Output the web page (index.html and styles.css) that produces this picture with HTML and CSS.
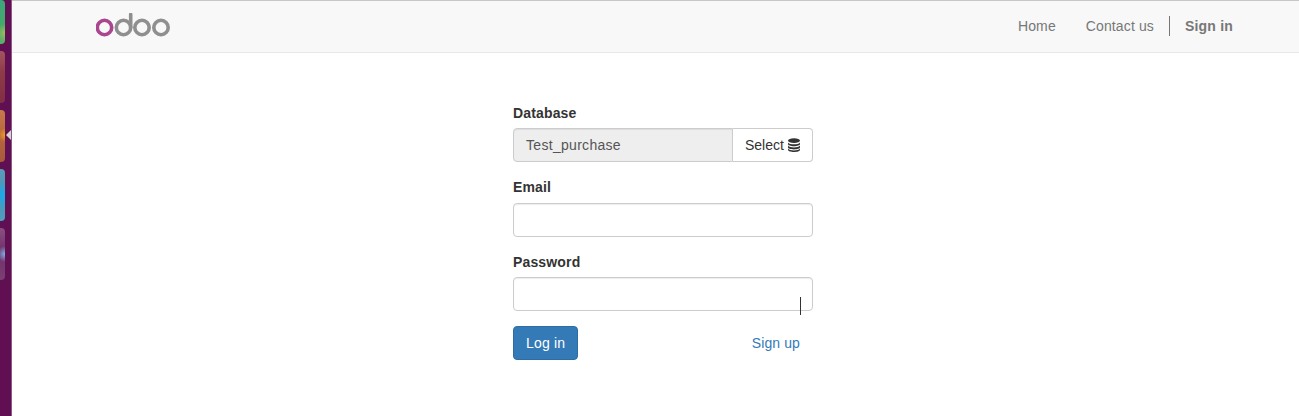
FILE: index.html
```html
<!DOCTYPE html>
<html lang="en">
<head>
<meta charset="utf-8">
<title>Odoo - Sign in</title>
<link rel="stylesheet" href="styles.css">
</head>
<body>
<div class="page">
  <aside class="launcher">
    <div class="tile tile-green"></div>
    <div class="tile tile-red"></div>
    <div class="tile tile-orange"></div>
    <div class="tile tile-blue"></div>
    <div class="tile tile-purple"></div>
    <span class="launcher-arrow"></span>
  </aside>
  <div class="content">
    <header class="navbar">
      <svg class="logo" width="76" height="27" viewBox="0 0 76 27" aria-label="odoo">
        <circle cx="8.500" cy="14.500" r="7.200" fill="none" stroke="#a9468f" stroke-width="3.600"/>
        <g fill="none" stroke="#8f8f8f" stroke-width="3.600">
          <circle cx="27.500" cy="14.500" r="7.200"/>
          <path d="M34.700 14.500V1.500" stroke-linecap="round"/>
          <circle cx="46" cy="14.500" r="7.200"/>
          <circle cx="65" cy="14.500" r="7.200"/>
        </g>
      </svg>
      <nav class="nav">
        <a class="nav-link" href="#">Home</a>
        <a class="nav-link" href="#">Contact us</a>
        <span class="nav-divider"></span>
        <a class="nav-link nav-link-strong" href="#">Sign in</a>
      </nav>
    </header>
    <main class="main">
      <form class="login">
        <div class="field">
          <label class="label">Database</label>
          <div class="input-group">
            <div class="input input-readonly">Test_purchase</div>
            <a class="select-btn" href="#">Select
              <svg class="db-icon" width="12" height="14" viewBox="0 0 12 14">
                <ellipse cx="6" cy="2.600" rx="6" ry="2.400" fill="#333"/>
                <path d="M0 4.400C1 5.800 3.400 6.300 6 6.300s5-.5 6-1.900V6.100C12 7.400 9.300 8.300 6 8.300S0 7.400 0 6.100Z" fill="#333"/>
                <path d="M0 7.600C1 9 3.400 9.500 6 9.500s5-.5 6-1.900V9.300C12 10.600 9.300 11.400 6 11.400S0 10.600 0 9.300Z" fill="#333"/>
                <path d="M0 10.500C1 11.900 3.400 12.400 6 12.400s5-.5 6-1.900v1.200C12 13 9.300 14 6 14S0 13 0 11.700Z" fill="#333"/>
              </svg>
            </a>
          </div>
        </div>
        <div class="field">
          <label class="label label-wide" for="login">Email</label>
          <input class="input" id="login" type="text">
        </div>
        <div class="field">
          <label class="label" for="password">Password</label>
          <input class="input" id="password" type="password">
        </div>
        <div class="actions">
          <button class="btn-primary" type="button">Log in</button>
          <a class="btn-link" href="#">Sign up</a>
        </div>
        <span class="mouse-cursor"></span>
      </form>
    </main>
  </div>
</div>
</body>
</html>
```
FILE: styles.css
```css
* { box-sizing: border-box; }
html, body { margin: 0; height: 100%; }
body {
  font-family: "Liberation Sans", Arial, sans-serif;
  font-size: 14px;
  line-height: 20px;
  letter-spacing: .2px;
  color: #333;
  background: #fff;
  overflow: hidden;
}
.page { display: flex; height: 416px; }

.launcher {
  position: relative;
  flex: 0 0 12px;
  display: flex;
  flex-direction: column;
  gap: 7px;
  background: #5f0f52;
  border-right: 1px solid #8a5c82;
}
.tile { width: 5px; height: 52px; border-radius: 0 4px 4px 0; }
.tile-green {
  height: 44px;
  background: radial-gradient(circle at 100% 75%, #9dbf5e, transparent 9px), linear-gradient(#3ca77b, #46a866 70%, #5cb06a);
}
.tile-red { background: linear-gradient(#a2565f, #8f3a48 40%, #7f2f45); }
.tile-orange {
  background: radial-gradient(circle at 100% 48%, #f0a020, transparent 7px), linear-gradient(#c67b4c, #b5653c 50%, #a85a3c);
}
.tile-blue {
  background: radial-gradient(circle at 100% 50%, #12b0f0, transparent 14px), linear-gradient(#5a9cb8, #4a93b5 50%, #4f9fc0);
}
.tile-purple {
  background: radial-gradient(circle at 100% 50%, #7fb4e8, transparent 8px), linear-gradient(#8a4f82, #70306a 45%, #7a3f73);
}
.launcher-arrow {
  position: absolute;
  left: 6px;
  top: 130px;
  border-style: solid;
  border-width: 5px 5px 5px 0;
  border-color: transparent #d8d4d6 transparent transparent;
}

.content { flex: 1; min-width: 0; display: flex; flex-direction: column; }
.navbar {
  height: 53px;
  display: flex;
  align-items: center;
  justify-content: space-between;
  padding: 0 51px 0 84px;
  background: #f8f8f8;
  border-top: 1px solid #c9c7c3;
  border-bottom: 1px solid #e7e7e7;
}
.logo { display: block; }
.nav { display: flex; align-items: center; margin-bottom: 2px; }
.nav-link { padding: 0 15px; color: #777; text-decoration: none; letter-spacing: .12px; }
.nav-link-strong { font-weight: 700; letter-spacing: .2px; }
.nav-divider { width: 1px; height: 20px; background: #777; }

.main { flex: 1; padding: 50px 0 0 15px; }
.login { position: relative; width: 300px; margin: 0 auto; }
.field { margin-bottom: 15px; }
.label { display: block; margin-bottom: 5px; font-weight: 700; letter-spacing: .15px; }
.label-wide { margin-bottom: 6px; }
.input {
  display: block;
  width: 100%;
  height: 34px;
  padding: 6px 12px;
  font: inherit;
  color: #555;
  background: #fff;
  border: 1px solid #ccc;
  border-radius: 4px;
  box-shadow: inset 0 1px 1px rgba(0, 0, 0, .075);
}
.input-group { display: flex; }
.input-readonly {
  flex: 1;
  width: auto;
  letter-spacing: .3px;
  background: #eee;
  border-radius: 4px 0 0 4px;
}
.select-btn {
  flex: 0 0 80px;
  display: flex;
  align-items: center;
  gap: 4px;
  height: 34px;
  padding: 0 12px;
  letter-spacing: 0;
  color: #333;
  text-decoration: none;
  background: #fff;
  border: 1px solid #ccc;
  border-left: 0;
  border-radius: 0 4px 4px 0;
}
.db-icon { display: block; }
.actions { display: flex; align-items: center; justify-content: space-between; }
.btn-primary {
  height: 34px;
  padding: 6px 12px;
  font: inherit;
  letter-spacing: .2px;
  color: #fff;
  background: #337ab7;
  border: 1px solid #2e6da4;
  border-radius: 4px;
}
.btn-link {
  padding: 6px 13px;
  color: #337ab7;
  letter-spacing: .1px;
  text-decoration: none;
}
.mouse-cursor {
  position: absolute;
  left: 287px;
  top: 194px;
  width: 1px;
  height: 18px;
  background: #333;
}
```
